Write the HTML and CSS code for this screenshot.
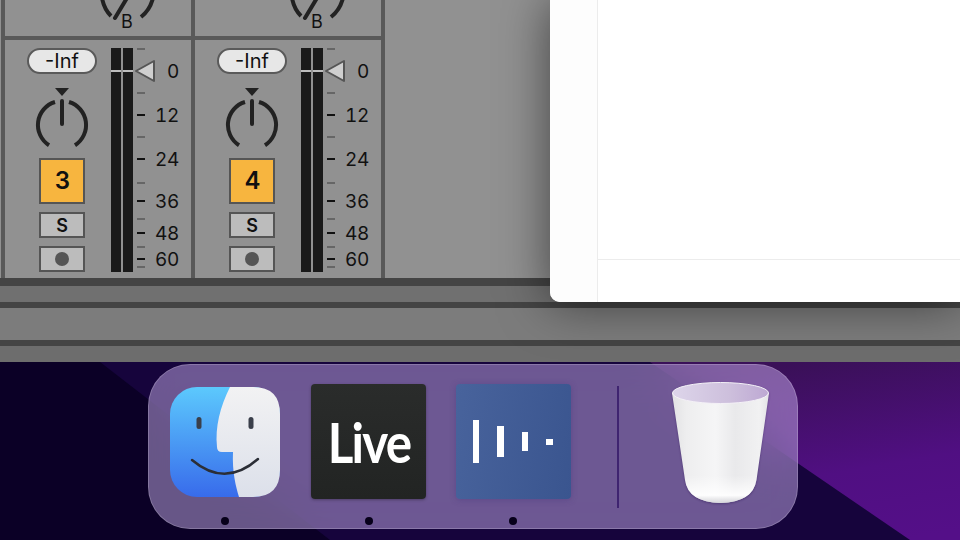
FILE: index.html
```html
<!DOCTYPE html>
<html lang="en">
<head>
<meta charset="utf-8">
<title>Live mixer and dock</title>
<link rel="stylesheet" href="styles.css">
</head>
<body>
<div class="screen">
  <section class="mixer">
    <div class="tracks">
      <div class="strip">
        <div class="strip-top">
          <svg class="send" viewBox="0 0 186 36" width="186" height="36"><path class="ink-butt" d="M97 -2Q99 9 106 16M148 -2Q145 10 136 17"/><path class="ink" d="M122 -2L110 18"/><text class="send-label" x="122" y="28">B</text></svg>
        </div>
        <div class="strip-body">
          <div class="controls">
            <div class="pill">-Inf</div>
            <svg class="knob" viewBox="0 0 60 62" width="60" height="62"><polygon class="ink-fill" points="23,0 37,0 30,8"/><path class="ink-butt" d="M23 14A24 24 0 0 0 17 57.200M37 14A24 24 0 0 1 43 57.200"/><path class="ink" d="M30 13V36"/></svg>
            <div class="btn-number">3</div>
            <div class="btn-small">S</div>
            <div class="btn-small"><span class="rec-dot"></span></div>
          </div>
          <div class="meter"><span class="meter-bar"></span><span class="meter-bar"></span></div>
          <svg class="scale" viewBox="0 0 48 224" width="48" height="224">
            <path class="tick-minor" d="M4 1H12M4 45H12M4 89H12M4 135H12M4 171H12M4 199H12M4 219H12"/>
            <path class="tick-major" d="M4 67H12M4 111H12M4 153H12M4 185H12M4 211H12"/>
            <polygon class="arrow" points="3,23 21,13 21,33"/>
            <text class="scale-label" x="46" y="29.500">0</text>
            <text class="scale-label" x="46" y="73.500">12</text>
            <text class="scale-label" x="46" y="117.500">24</text>
            <text class="scale-label" x="46" y="159.500">36</text>
            <text class="scale-label" x="46" y="191.500">48</text>
            <text class="scale-label" x="46" y="217.500">60</text>
          </svg>
        </div>
      </div>
      <div class="strip">
        <div class="strip-top">
          <svg class="send" viewBox="0 0 186 36" width="186" height="36"><path class="ink-butt" d="M97 -2Q99 9 106 16M148 -2Q145 10 136 17"/><path class="ink" d="M122 -2L110 18"/><text class="send-label" x="122" y="28">B</text></svg>
        </div>
        <div class="strip-body">
          <div class="controls">
            <div class="pill">-Inf</div>
            <svg class="knob" viewBox="0 0 60 62" width="60" height="62"><polygon class="ink-fill" points="23,0 37,0 30,8"/><path class="ink-butt" d="M23 14A24 24 0 0 0 17 57.200M37 14A24 24 0 0 1 43 57.200"/><path class="ink" d="M30 13V36"/></svg>
            <div class="btn-number">4</div>
            <div class="btn-small">S</div>
            <div class="btn-small"><span class="rec-dot"></span></div>
          </div>
          <div class="meter"><span class="meter-bar"></span><span class="meter-bar"></span></div>
          <svg class="scale" viewBox="0 0 48 224" width="48" height="224">
            <path class="tick-minor" d="M4 1H12M4 45H12M4 89H12M4 135H12M4 171H12M4 199H12M4 219H12"/>
            <path class="tick-major" d="M4 67H12M4 111H12M4 153H12M4 185H12M4 211H12"/>
            <polygon class="arrow" points="3,23 21,13 21,33"/>
            <text class="scale-label" x="46" y="29.500">0</text>
            <text class="scale-label" x="46" y="73.500">12</text>
            <text class="scale-label" x="46" y="117.500">24</text>
            <text class="scale-label" x="46" y="159.500">36</text>
            <text class="scale-label" x="46" y="191.500">48</text>
            <text class="scale-label" x="46" y="217.500">60</text>
          </svg>
        </div>
      </div>
    </div>
    <div class="band-dark band-a"></div>
    <div class="band band-b"></div>
    <div class="band-dark band-c"></div>
    <div class="band band-d"></div>
    <div class="band-dark band-c"></div>
    <div class="band band-e"></div>
    <div class="window">
      <div class="win-side"></div>
      <div class="win-main"><div class="win-content"></div><div class="win-foot"></div></div>
    </div>
  </section>
  <section class="desktop">
    <svg class="wallpaper" viewBox="0 0 960 178" width="960" height="178">
      <defs><linearGradient id="wall" x1="0.5" y1="0" x2="0.8" y2="1"><stop offset="0" stop-color="#3a1058"/><stop offset="0.6" stop-color="#500f82"/><stop offset="1" stop-color="#540f88"/></linearGradient></defs>
      <polygon fill="#16043c" points="100,0 660,0 910,178 330,178"/>
      <polygon fill="url(#wall)" points="650,0 960,0 960,178 910,178"/>
    </svg>
    <div class="dock">
      <div class="dock-item">
        <svg class="dock-icon" viewBox="-2 -3 115 115" width="115" height="115">
          <defs>
            <linearGradient id="fb" x1="0" y1="0" x2="0" y2="1"><stop offset="0" stop-color="#5cc9fd"/><stop offset="1" stop-color="#386beb"/></linearGradient>
            <linearGradient id="fw" x1="0" y1="0" x2="0" y2="1"><stop offset="0" stop-color="#f2f2f3"/><stop offset="1" stop-color="#dce0ea"/></linearGradient>
          </defs>
          <rect width="110" height="110" rx="27" fill="url(#fb)"/>
          <path fill="url(#fw)" d="M60 0C50 20 45 40 47 60Q47 65 52 65L63 65C62 85 66 100 69 110L83 110Q110 110 110 83L110 27Q110 0 83 0Z"/>
          <rect class="f-eye" x="26.500" y="30" width="5" height="12" rx="2.500"/>
          <rect class="f-eye" x="78.500" y="30" width="5" height="12" rx="2.500"/>
          <path class="f-smile" d="M22 73Q55 101 88 72"/>
        </svg>
        <span class="dot"></span>
      </div>
      <div class="dock-item">
        <div class="dock-icon live-icon"><span class="live-word">Live</span></div>
        <span class="dot"></span>
      </div>
      <div class="dock-item">
        <div class="dock-icon bars-icon">
          <span class="bar bar-1"></span><span class="bar bar-2"></span><span class="bar bar-3"></span><span class="bar bar-4"></span>
        </div>
        <span class="dot"></span>
      </div>
      <span class="dock-divider"></span>
      <svg class="trash" viewBox="0 0 100 122" width="100" height="122">
        <defs>
          <linearGradient id="tb" x1="0" y1="0" x2="1" y2="0"><stop offset="0" stop-color="#e2e2e4"/><stop offset="0.15" stop-color="#eeeeef"/><stop offset="0.45" stop-color="#f5f5f6"/><stop offset="0.65" stop-color="#e9e9eb"/><stop offset="0.9" stop-color="#f1f1f2"/><stop offset="1" stop-color="#e2e2e5"/></linearGradient>
          <linearGradient id="tg" x1="0" y1="0" x2="0" y2="1"><stop offset="0.75" stop-color="#fff" stop-opacity="0"/><stop offset="0.93" stop-color="#fff" stop-opacity="0.9"/><stop offset="1" stop-color="#cfcfd4" stop-opacity="0.8"/></linearGradient>
          <linearGradient id="tr" x1="0" y1="0" x2="1" y2="0"><stop offset="0" stop-color="#ddd5ea"/><stop offset="0.6" stop-color="#cdbfdc"/><stop offset="1" stop-color="#bda8d3"/></linearGradient>
        </defs>
        <path fill="url(#tb)" d="M1 11L14 98Q17 120 49.500 121Q82 120 85.500 98L98 11Z"/>
        <path fill="url(#tg)" d="M1 11L14 98Q17 120 49.500 121Q82 120 85.500 98L98 11Z"/>
        <ellipse cx="49.500" cy="11" rx="48" ry="10.500" fill="url(#tr)" stroke="#f4f1f7" stroke-width="1"/>
      </svg>
    </div>
  </section>
</div>
</body>
</html>
```
FILE: styles.css
```css
* { box-sizing: border-box; }
html, body { margin: 0; padding: 0; }
body { width: 960px; height: 540px; overflow: hidden; background: #0b0026; font-family: "Inter", "Liberation Sans", sans-serif; }
.screen { width: 960px; height: 540px; display: flex; flex-direction: column; }

.mixer { position: relative; height: 362px; overflow: hidden; flex: none; background: #919191; }
.tracks { height: 278px; display: flex; margin-left: 1px; border-left: 4px solid #595959; }
.strip { width: 190px; border-right: 4px solid #595959; display: flex; flex-direction: column; }
.strip-top { height: 40px; border-bottom: 4px solid #595959; overflow: hidden; }
.send { display: block; }
.send-label { font-size: 18px; fill: #111; text-anchor: middle; }
.ink { fill: none; stroke: #222; stroke-width: 4; stroke-linecap: round; }
.ink-butt { fill: none; stroke: #222; stroke-width: 4; stroke-linecap: butt; }
.ink-fill { fill: #222; }

.strip-body { display: flex; padding: 8px 0 0 22px; }
.controls { width: 70px; display: flex; flex-direction: column; align-items: center; }
.pill { width: 70px; height: 26px; border: 2px solid #5a5a5a; border-radius: 13px; background: #e7e7e7; color: #111; font-size: 20px; line-height: 22px; text-align: center; }
.knob { display: block; margin-top: 14px; }
.btn-number { width: 46px; height: 46px; margin-top: 8px; border: 2px solid #555; background: #f7b53f; color: #111; font-size: 24px; font-weight: 600; line-height: 42px; text-align: center; padding-left: 1px; }
.btn-small { width: 46px; height: 26px; margin-top: 8px; border: 2px solid #555; background: #bcbcbc; color: #111; font-size: 18px; font-weight: 600; display: flex; align-items: center; justify-content: center; }
.rec-dot { width: 14px; height: 14px; border-radius: 50%; background: #555; }

.meter { margin-left: 14px; height: 224px; display: flex; gap: 2px; }
.meter-bar { width: 10px; background: linear-gradient(to bottom, #1a1a1a 0, #1a1a1a 22px, #bdbdbd 22px, #bdbdbd 24px, #1a1a1a 24px); }
.scale { display: block; flex: none; }
.tick-minor { fill: none; stroke: #666; stroke-width: 2; }
.tick-major { fill: none; stroke: #111; stroke-width: 2; }
.arrow { fill: #cfcfcf; stroke: #555; stroke-width: 2; stroke-linejoin: round; }
.scale-label { font-size: 19px; fill: #111; text-anchor: end; font-feature-settings: "tnum"; letter-spacing: -0.3px; }

.band { flex: none; }
.band-dark { flex: none; background: #444; }
.band-a { height: 8px; }
.band-b { height: 16px; background: #707070; }
.band-c { height: 6px; }
.band-d { height: 32px; background: #7c7c7c; }
.band-e { height: 16px; background: #6d6d6d; }

.window { position: absolute; left: 550px; top: 0; width: 410px; height: 302px; display: flex; background: #fff; border-bottom-left-radius: 10px; box-shadow: 0 0 50px rgba(0, 0, 0, 0.55); overflow: hidden; }
.win-side { width: 48px; flex: none; background: #fdfdfd; border-right: 1px solid #ececec; }
.win-main { flex: 1; display: flex; flex-direction: column; }
.win-content { height: 260px; border-bottom: 1px solid #ececec; }
.win-foot { flex: 1; }

.desktop { position: relative; flex: 1; overflow: hidden; background: #0b0026; }
.wallpaper { position: absolute; left: 0; top: 0; display: block; }
.dock { position: relative; margin: 2px 0 0 148px; width: 650px; height: 165px; padding: 19px 0 0 4px; border: 1.500px solid rgba(255, 255, 255, 0.2); border-radius: 42px; background: rgba(213, 187, 250, 0.46); -webkit-backdrop-filter: blur(24px); backdrop-filter: blur(24px); display: flex; align-items: flex-start; }
.dock-item { width: 144px; flex: none; display: flex; flex-direction: column; align-items: center; }
.dock-icon { display: block; width: 115px; height: 115px; flex: none; }
.dot { width: 8px; height: 8px; margin-top: 18px; border-radius: 50%; background: #07001a; }

.live-icon { margin-right: 1px; background: linear-gradient(to bottom, #2a2c2b, #222423); border-radius: 4px; box-shadow: 0 1px 3px rgba(0, 0, 0, 0.3); color: #fff; font-family: "Lato", "Liberation Sans", sans-serif; font-size: 56px; font-weight: 700; letter-spacing: -2px; line-height: 115px; text-align: center; }
.live-word { display: inline-block; transform: scaleX(0.88); }
.bars-icon { display: flex; align-items: center; padding-left: 17px; gap: 18px; border-radius: 4px; background: linear-gradient(100deg, #48639c, #3a558f); box-shadow: 0 1px 6px rgba(60, 50, 120, 0.35); }
.bar { background: #fff; flex: none; }
.bar-1 { width: 6px; height: 43px; }
.bar-2 { width: 7px; height: 31px; }
.bar-3 { width: 6px; height: 19px; }
.bar-4 { width: 7px; height: 6px; }

.dock-divider { width: 2px; height: 122px; margin: 2px 0 0 32px; background: #3f2470; flex: none; }
.trash { display: block; flex: none; margin: -2px 0 0 52px; filter: drop-shadow(0 1px 1px rgba(40, 20, 80, 0.4)); }
.f-eye { fill: #3a3f4a; }
.f-smile { fill: none; stroke: #2b2e36; stroke-width: 2.500; stroke-linecap: round; }
```
